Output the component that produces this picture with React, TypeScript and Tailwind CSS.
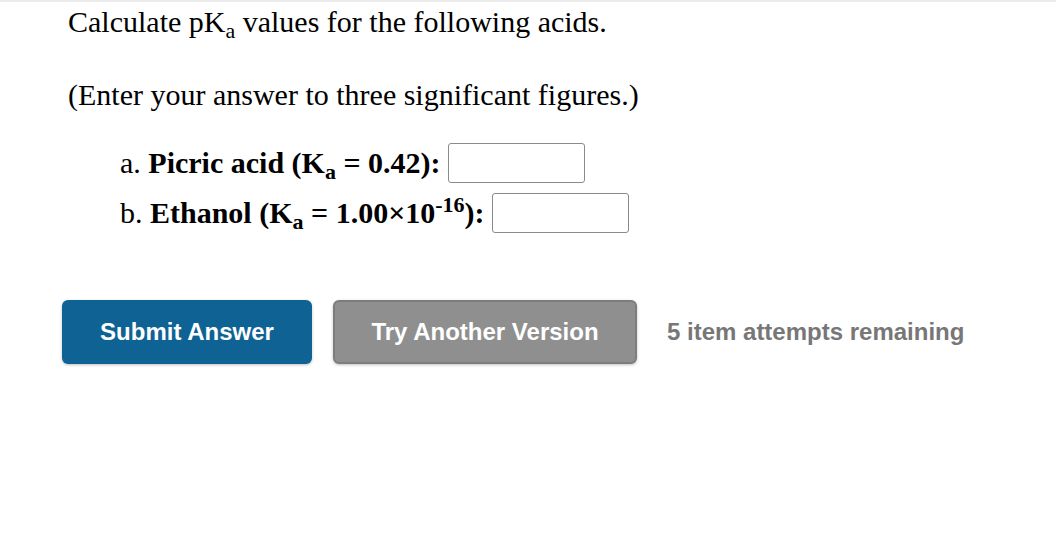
import React from 'react';

const serif = {fontFamily: '"Liberation Serif", "Times New Roman", serif'};

const AnswerBox = () => (
	<input type="text" className="w-[137px] h-[40px] border-[1.5px] border-[#8a8a8a] rounded-[3px] bg-white outline-none"/>
);

const App = () => {
	return (
		<div className="w-[1056px] h-[552px] bg-white overflow-hidden">
			<div className="h-[2px] bg-[#ececec]"/>
			<div className="pl-[68px] text-[30px] text-black leading-[34px]" style={serif}>
				<p className="mt-[3px]">
					Calculate pK<sub className="text-[22px]">a</sub> values for the following acids.
				</p>
				<p className="mt-[39px]">(Enter your answer to three significant figures.)</p>
				<div className="pl-[52px] mt-[31px] flex flex-col gap-[10px]">
					<div className="flex items-center gap-[7px] h-[40px]">
						<span>
							a. <b>Picric acid (K<sub className="text-[22px]">a</sub> = 0.42):</b>
						</span>
						<AnswerBox/>
					</div>
					<div className="flex items-center gap-[7px] h-[40px]">
						<span>
							b. <b>Ethanol (K<sub className="text-[22px]">a</sub> = 1.00×10<sup className="text-[22px] top-[-11px]">-16</sup>):</b>
						</span>
						<AnswerBox/>
					</div>
				</div>
			</div>
			<div className="flex items-center pl-[62px] mt-[67px] gap-[21px]" style={{fontFamily: '"Liberation Sans", Arial, sans-serif'}}>
				<button className="w-[250px] h-[64px] rounded-[6px] bg-[#0e6294] text-white font-bold text-[24px] shadow-[0_1px_3px_rgba(0,0,0,0.25)]">
					Submit Answer
				</button>
				<button className="w-[304px] h-[64px] rounded-[6px] bg-[#8f8f8f] border-2 border-[#7d7d7d] text-white font-bold text-[24px] shadow-[0_1px_3px_rgba(0,0,0,0.25)]">
					Try Another Version
				</button>
				<span className="ml-[9px] text-[#777777] font-bold text-[24px]">5 item attempts remaining</span>
			</div>
		</div>
	);
};

export default App;
